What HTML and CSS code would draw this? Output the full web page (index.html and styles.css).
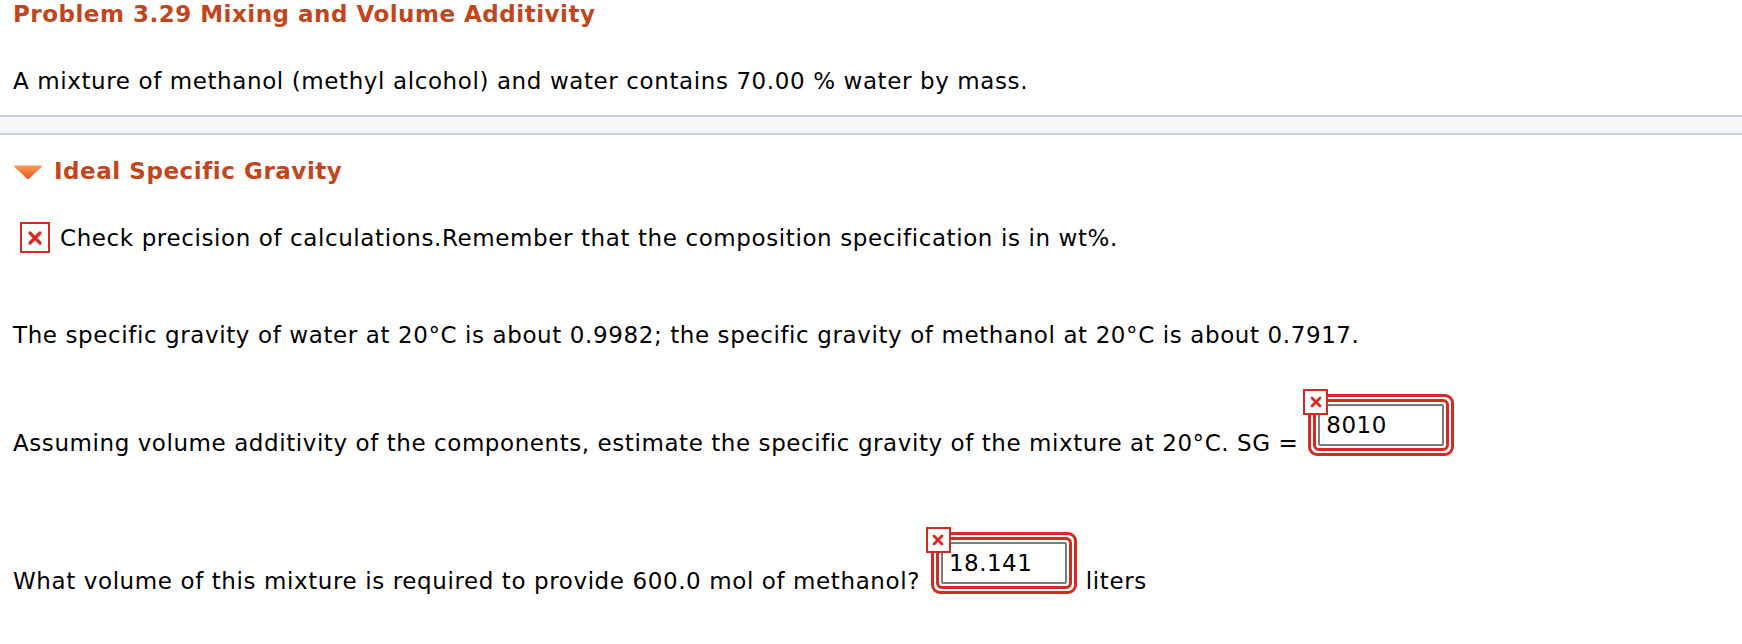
FILE: index.html
```html
<!DOCTYPE html>
<html>
<head>
<meta charset="utf-8">
<link rel="stylesheet" href="styles.css">
</head>
<body>
<h1 class="title">Problem 3.29 Mixing and Volume Additivity</h1>
<p class="intro">A mixture of methanol (methyl alcohol) and water contains 70.00 % water by mass.</p>
<div class="separator"></div>
<h2 class="part-head">
  <svg class="caret" width="30" height="16" viewBox="0 0 30 16">
    <defs>
      <linearGradient id="cg" x1="0" y1="0" x2="0" y2="1">
        <stop offset="0" stop-color="#fb9a55"/>
        <stop offset="1" stop-color="#e5591b"/>
      </linearGradient>
    </defs>
    <path d="M2 1.5 H28 Q29.5 1.5 28.5 3 L16.2 14.6 Q15 15.6 13.8 14.6 L1.5 3 Q0.5 1.5 2 1.5 Z" fill="url(#cg)"/>
  </svg>
  <span>Ideal Specific Gravity</span>
</h2>
<div class="feedback">
  <span class="badge badge-lg">
    <svg width="16" height="16" viewBox="0 0 16 16"><path d="M3 3 L13 13 M13 3 L3 13" stroke="#d42a1f" stroke-width="3.2" stroke-linecap="round"/></svg>
  </span>
  <span>Check precision of calculations.Remember that the composition specification is in wt%.</span>
</div>
<p class="text given">The specific gravity of water at 20°C is about 0.9982; the specific gravity of methanol at 20°C is about 0.7917.</p>
<p class="text q1">Assuming volume additivity of the components, estimate the specific gravity of the mixture at 20°C. SG = <span class="field"><span class="badge badge-sm"><svg width="12" height="12" viewBox="0 0 12 12"><path d="M2 2 L10 10 M10 2 L2 10" stroke="#d42a1f" stroke-width="2.8" stroke-linecap="round"/></svg></span><span class="field-inner"><input class="answer" type="text" value="8010"></span></span></p>
<p class="text q2">What volume of this mixture is required to provide 600.0 mol of methanol? <span class="field"><span class="badge badge-sm"><svg width="12" height="12" viewBox="0 0 12 12"><path d="M2 2 L10 10 M10 2 L2 10" stroke="#d42a1f" stroke-width="2.8" stroke-linecap="round"/></svg></span><span class="field-inner"><input class="answer" type="text" value="18.141"></span></span> liters</p>
</body>
</html>
```
FILE: styles.css
```css
html, body {
  margin: 0;
  padding: 0;
  background: #ffffff;
}
body {
  font-family: "DejaVu Sans", Verdana, sans-serif;
  font-size: 23px;
  line-height: 28px;
  letter-spacing: 0.6px;
  color: #000000;
}
.title {
  margin: 0;
  padding-left: 13px;
  font-size: 23px;
  line-height: 28px;
  font-weight: bold;
  letter-spacing: 0.5px;
  color: #c2461d;
}
.intro {
  margin: 39px 0 0;
  padding-left: 13px;
}
.separator {
  margin-top: 20px;
  height: 16px;
  background: #f6f7f9;
  border-top: 2px solid #c9d0da;
  border-bottom: 2px solid #c9d0da;
}
.part-head {
  margin: 22px 0 0;
  padding-left: 13px;
  display: flex;
  align-items: center;
  gap: 11px;
  font-size: 23px;
  line-height: 28px;
  font-weight: bold;
  letter-spacing: 0.55px;
  color: #c2461d;
}
.caret {
  display: block;
  margin-top: 1px;
}
.feedback {
  margin-top: 37px;
  padding-left: 20px;
  display: flex;
  align-items: center;
  gap: 10px;
}
.badge {
  display: inline-flex;
  align-items: center;
  justify-content: center;
  box-sizing: border-box;
  background: #ffffff;
  border: 2px solid #d42a1f;
}
.badge svg {
  display: block;
}
.badge-lg {
  width: 30px;
  height: 31px;
}
.badge-sm {
  position: absolute;
  left: -8px;
  top: -8px;
  width: 25px;
  height: 26px;
  z-index: 2;
}
.text {
  margin: 0;
  padding-left: 13px;
}
.given {
  margin-top: 68px;
}
.q1 {
  margin-top: 45px;
  letter-spacing: 0.57px;
}
.q2 {
  margin-top: 75px;
}
.field {
  position: relative;
  display: inline-block;
  vertical-align: text-bottom;
  box-sizing: border-box;
  border: 3px solid #d42a1f;
  border-radius: 9px;
  padding: 2px;
  background: #ffffff;
  margin-left: 2px;
  margin-right: 1px;
  letter-spacing: 0;
}
.q2 .field {
  margin-left: 3px;
}
.field-inner {
  display: block;
  border: 3px solid #d42a1f;
  border-radius: 6px;
  padding: 2px;
  background: #ffffff;
}
.answer {
  display: block;
  box-sizing: border-box;
  width: 126px;
  height: 42px;
  margin: 0;
  padding: 0 6px;
  border: 2px solid #7a7a7a;
  border-radius: 2px;
  font-family: "DejaVu Sans", Verdana, sans-serif;
  font-size: 23px;
  letter-spacing: 0.5px;
  color: #000000;
  background: #ffffff;
  outline: none;
}
```
